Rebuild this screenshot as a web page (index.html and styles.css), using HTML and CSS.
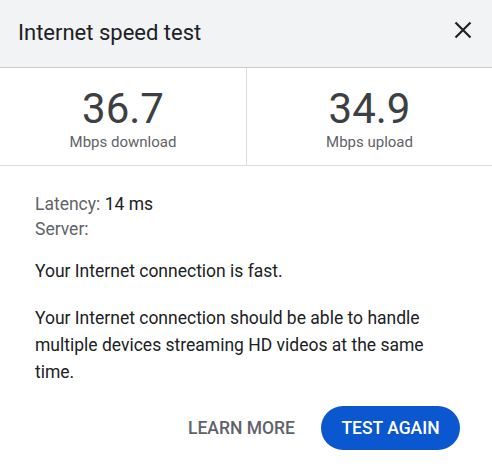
FILE: index.html
```html
<!DOCTYPE html>
<html>
<head>
<meta charset="utf-8">
<link rel="stylesheet" href="styles.css">
</head>
<body>
<div class="dialog">
  <header class="head">
    <h1 class="title">Internet speed test</h1>
    <button class="close" aria-label="Close">
      <svg width="18" height="18" viewBox="0 0 18 18"><path d="M1.5 1.5 L16.5 16.5 M16.5 1.5 L1.5 16.5" stroke="#202124" stroke-width="2.2" fill="none"/></svg>
    </button>
  </header>
  <section class="stats">
    <div class="stat">
      <div class="num">36.7</div>
      <div class="unit">Mbps download</div>
    </div>
    <div class="stat">
      <div class="num">34.9</div>
      <div class="unit">Mbps upload</div>
    </div>
  </section>
  <section class="body">
    <div class="meta">
      <div><span class="label">Latency:</span> <span class="val">14 ms</span></div>
      <div><span class="label">Server:</span></div>
    </div>
    <p class="msg">Your Internet connection is fast.</p>
    <p class="msg desc">Your Internet connection should be able to handle multiple devices streaming HD videos at the same time.</p>
    <div class="actions">
      <button class="btn text">LEARN MORE</button>
      <button class="btn primary">TEST AGAIN</button>
    </div>
  </section>
</div>
</body>
</html>
```
FILE: styles.css
```css
html, body { margin: 0; padding: 0; background: #fff; }
body { font-family: Roboto, "Noto Sans", sans-serif; color: #202124; width: 492px; height: 472px; overflow: hidden; }
.head {
  height: 68px; background: #f1f3f4; border-bottom: 1px solid #c9cbce;
  display: flex; align-items: center; justify-content: space-between;
  padding: 0 20px 0 18px; box-sizing: border-box;
}
.title { margin: 0; font-size: 22px; font-weight: 400; color: #202124; margin-top: -3px; }
.close { background: none; border: 0; padding: 0; width: 18px; height: 18px; margin-top: -7px; display: flex; }
.stats { display: grid; grid-template-columns: 247px 1fr; height: 97px; border-bottom: 1px solid #dadce0; }
.stat { display: flex; flex-direction: column; align-items: center; padding-top: 18px; }
.stat:first-child { border-right: 1px solid #dadce0; }
.num { font-size: 42px; line-height: 46px; color: #3c4043; }
.unit { font-size: 15px; line-height: 18px; color: #5f6368; margin-top: 1px; }
.body { padding: 26px 35px 0 35px; font-size: 17.5px; }
.meta { line-height: 25px; }
.label { color: #5f6368; }
.val { color: #202124; }
.msg { margin: 16px 0 0; line-height: 27px; color: #202124; }
.desc { margin-top: 20px; }
.actions { display: flex; justify-content: flex-end; align-items: center; gap: 26px; margin-top: 20px; margin-right: -3px; }
.btn { font-family: Roboto, sans-serif; font-size: 17.5px; font-weight: 500; border: 0; cursor: pointer; }
.text { background: none; color: #5f6368; padding: 0; }
.primary { background: #0b57d0; color: #fff; height: 44px; width: 139px; border-radius: 22px; padding: 0; }
```
